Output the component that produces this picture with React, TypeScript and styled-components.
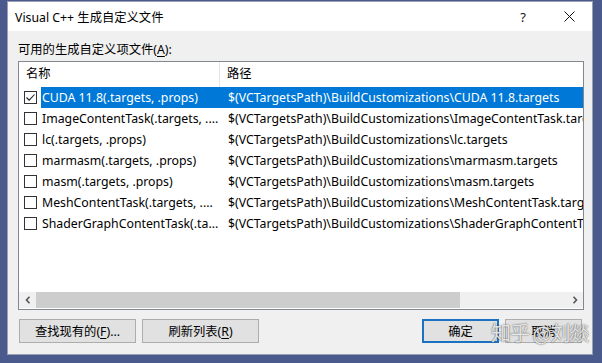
import React from "react";
import styled, { createGlobalStyle } from "styled-components";

const Global = createGlobalStyle`
  html, body { margin: 0; padding: 0; background: #4a5a8c; }
  body { width: 602px; height: 363px; overflow: hidden; font-family: "Noto Sans", "Noto Sans CJK SC", sans-serif; }
`;

const Screen = styled.div`
  width: 602px;
  height: 363px;
  padding: 1px 9px 8px 7px;
  box-sizing: border-box;
  position: relative;
`;

const Win = styled.div`
  width: 586px;
  height: 354px;
  box-sizing: border-box;
  border: 1px solid #9aa0b4;
  background: #f0f0f0;
  display: flex;
  flex-direction: column;
`;

const TitleBar = styled.div`
  height: 29px;
  flex: none;
  background: #ffffff;
  display: flex;
  align-items: center;
  padding-left: 7px;
  font-size: 12.3px;
  color: #000;
`;

const TitleText = styled.div`
  flex: 1;
`;

const TitleBtn = styled.div`
  width: 46px;
  height: 29px;
  display: flex;
  align-items: center;
  justify-content: center;
  font-size: 13px;
  color: #111;
`;

const Body = styled.div`
  flex: 1;
  display: flex;
  flex-direction: column;
  padding: 9px 9px 0 10px;
`;

const Label = styled.div`
  font-size: 12.3px;
  height: 20px;
  line-height: 20px;
  margin-bottom: 1px;
  color: #000;
`;

const U = styled.span`
  text-decoration: underline;
  text-underline-offset: 2px;
`;

const ListBox = styled.div`
  width: 566px;
  height: 249px;
  box-sizing: border-box;
  border: 1px solid #828790;
  background: #fff;
  display: flex;
  flex-direction: column;
  overflow: hidden;
`;

const Header = styled.div`
  height: 25px;
  flex: none;
  display: flex;
  font-size: 12.3px;
  color: #000;
`;

const HeadCell = styled.div<{ $w?: number }>`
  ${(p) => (p.$w ? `width: ${p.$w}px; flex: none;` : "flex: 1;")}
  box-sizing: border-box;
  padding: 0 0 3px 7px;
  display: flex;
  align-items: center;
  border-right: ${(p) => (p.$w ? "1px solid #e5e5e5" : "none")};
`;

const Rows = styled.div`
  flex: 1;
  display: flex;
  flex-direction: column;
`;

const Row = styled.div`
  height: 21px;
  display: flex;
  align-items: center;
  font-size: 12.3px;
  white-space: nowrap;
`;

const CheckCell = styled.div`
  width: 22px;
  flex: none;
  display: flex;
  align-items: center;
  padding-left: 5px;
  box-sizing: border-box;
`;

const Box = styled.div`
  width: 13px;
  height: 13px;
  box-sizing: border-box;
  border: 1px solid #333;
  background: #fff;
  display: flex;
  align-items: center;
  justify-content: center;
`;

const Line = styled.div<{ $sel?: boolean }>`
  flex: 1;
  height: 21px;
  display: flex;
  align-items: center;
  background: ${(p) => (p.$sel ? "#0078d7" : "transparent")};
  color: ${(p) => (p.$sel ? "#fff" : "#000")};
  overflow: hidden;
`;

const NameCell = styled.div`
  width: 178px;
  flex: none;
  padding-left: 1px;
  overflow: hidden;
`;

const PathCell = styled.div`
  flex: 1;
  padding-left: 8px;
  overflow: hidden;
`;

const HScroll = styled.div`
  height: 16px;
  flex: none;
  display: flex;
  background: #f0f0f0;
  margin-bottom: 1px;
`;

const Arrow = styled.div`
  width: 17px;
  display: flex;
  align-items: center;
  justify-content: center;
  flex: none;
`;

const Thumb = styled.div`
  width: 424px;
  background: #cdcdcd;
  flex: none;
`;

const Track = styled.div`
  flex: 1;
`;

const ButtonRow = styled.div`
  display: flex;
  margin-top: 9px;
  padding-left: 1px;
`;

const Btn = styled.div<{ $w: number; $primary?: boolean; $gap?: number }>`
  width: ${(p) => p.$w}px;
  height: 24px;
  box-sizing: border-box;
  margin-left: ${(p) => p.$gap ?? 0}px;
  border: ${(p) => (p.$primary ? "2px solid #1c72c0" : "1px solid #adadad")};
  background: #e1e1e1;
  display: flex;
  align-items: center;
  justify-content: center;
  font-size: 12.3px;
  color: #000;
`;

const Watermark = styled.div`
  position: absolute;
  left: 491px;
  top: 318px;
  font-size: 20px;
  font-family: "Noto Sans CJK SC", sans-serif;
  color: rgba(255, 255, 255, 0.85);
  text-shadow: 0 0 1px rgba(40, 40, 40, 0.75), 0 0 2px rgba(40, 40, 40, 0.4);
  white-space: nowrap;
  letter-spacing: -1px;
`;

const rows = [
  { name: "CUDA 11.8(.targets, .props)", path: "$(VCTargetsPath)\\BuildCustomizations\\CUDA 11.8.targets", checked: true },
  { name: "ImageContentTask(.targets, ....", path: "$(VCTargetsPath)\\BuildCustomizations\\ImageContentTask.targets" },
  { name: "lc(.targets, .props)", path: "$(VCTargetsPath)\\BuildCustomizations\\lc.targets" },
  { name: "marmasm(.targets, .props)", path: "$(VCTargetsPath)\\BuildCustomizations\\marmasm.targets" },
  { name: "masm(.targets, .props)", path: "$(VCTargetsPath)\\BuildCustomizations\\masm.targets" },
  { name: "MeshContentTask(.targets, ....", path: "$(VCTargetsPath)\\BuildCustomizations\\MeshContentTask.targets" },
  { name: "ShaderGraphContentTask(.ta...", path: "$(VCTargetsPath)\\BuildCustomizations\\ShaderGraphContentTask.targets" },
];

export default function App() {
  return (
    <Screen>
      <Global />
      <Win>
        <TitleBar>
          <TitleText>Visual C++ 生成自定义文件</TitleText>
          <TitleBtn>?</TitleBtn>
          <TitleBtn>
            <svg width="11" height="11" viewBox="0 0 11 11">
              <path d="M0.5 0.5 L10.5 10.5 M10.5 0.5 L0.5 10.5" stroke="#111" strokeWidth="1" />
            </svg>
          </TitleBtn>
        </TitleBar>
        <Body>
          <Label>
            可用的生成自定义项文件(<U>A</U>):
          </Label>
          <ListBox>
            <Header>
              <HeadCell $w={201}>名称</HeadCell>
              <HeadCell>路径</HeadCell>
            </Header>
            <Rows>
              {rows.map((r) => (
                <Row key={r.name}>
                  <CheckCell>
                    <Box>
                      {r.checked && (
                        <svg width="11" height="11" viewBox="0 0 11 11">
                          <path d="M1.5 5.5 L4.2 8.2 L9.5 2.5" stroke="#222" strokeWidth="1.1" fill="none" />
                        </svg>
                      )}
                    </Box>
                  </CheckCell>
                  <Line $sel={r.checked}>
                    <NameCell>{r.name}</NameCell>
                    <PathCell>{r.path}</PathCell>
                  </Line>
                </Row>
              ))}
            </Rows>
            <HScroll>
              <Arrow>
                <svg width="6" height="8" viewBox="0 0 6 8">
                  <path d="M4.5 0.8 L1.5 4 L4.5 7.2" stroke="#555" strokeWidth="1.6" fill="none" />
                </svg>
              </Arrow>
              <Thumb />
              <Track />
              <Arrow>
                <svg width="6" height="8" viewBox="0 0 6 8">
                  <path d="M1.5 0.8 L4.5 4 L1.5 7.2" stroke="#555" strokeWidth="1.6" fill="none" />
                </svg>
              </Arrow>
            </HScroll>
          </ListBox>
          <ButtonRow>
            <Btn $w={117}>
              查找现有的(<U>F</U>)...
            </Btn>
            <Btn $w={117} $gap={6}>
              刷新列表(<U>R</U>)
            </Btn>
            <Btn $w={77} $gap={163} $primary>
              确定
            </Btn>
            <Btn $w={77} $gap={6}>
              取消
            </Btn>
          </ButtonRow>
        </Body>
      </Win>
      <Watermark>知乎 @刘燚</Watermark>
    </Screen>
  );
}
